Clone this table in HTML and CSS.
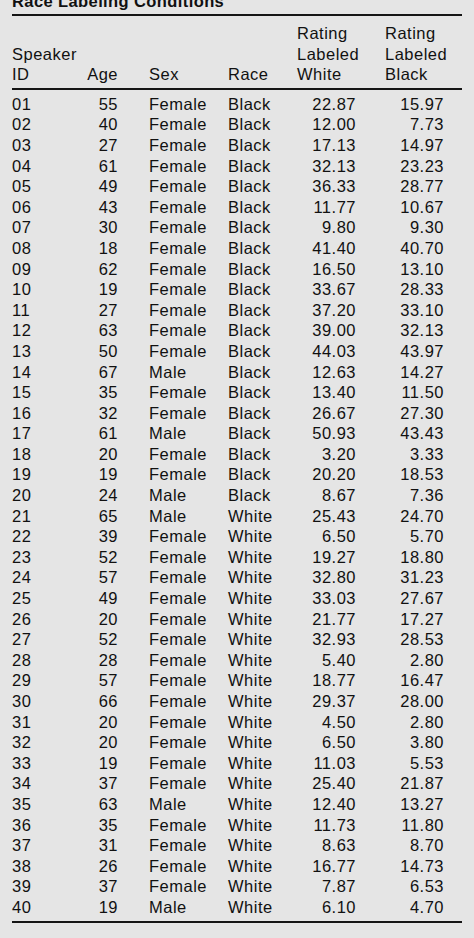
FILE: index.html
```html
<!DOCTYPE html>
<html>
<head>
<meta charset="utf-8">
<link rel="stylesheet" href="styles.css">
</head>
<body>
<div class="page">
  <div class="title">Race Labeling Conditions</div>
  <table class="data">
    <colgroup>
      <col class="c1"><col class="c2"><col class="c3"><col class="c4"><col class="c5"><col class="c6"><col class="c7">
    </colgroup>
    <thead>
      <tr>
        <th class="l">Speaker<br>ID</th>
        <th class="r">Age</th>
        <th class="l sex">Sex</th>
        <th class="l">Race</th>
        <th class="l">Rating<br>Labeled<br>White</th>
        <th class="l black">Rating<br>Labeled<br>Black</th>
        <th></th>
      </tr>
    </thead>
    <tbody id="rows">
<tr><td>01</td><td class="r">55</td><td class="sex">Female</td><td>Black</td><td class="r">22.87</td><td class="r">15.97</td><td></td></tr>
<tr><td>02</td><td class="r">40</td><td class="sex">Female</td><td>Black</td><td class="r">12.00</td><td class="r">7.73</td><td></td></tr>
<tr><td>03</td><td class="r">27</td><td class="sex">Female</td><td>Black</td><td class="r">17.13</td><td class="r">14.97</td><td></td></tr>
<tr><td>04</td><td class="r">61</td><td class="sex">Female</td><td>Black</td><td class="r">32.13</td><td class="r">23.23</td><td></td></tr>
<tr><td>05</td><td class="r">49</td><td class="sex">Female</td><td>Black</td><td class="r">36.33</td><td class="r">28.77</td><td></td></tr>
<tr><td>06</td><td class="r">43</td><td class="sex">Female</td><td>Black</td><td class="r">11.77</td><td class="r">10.67</td><td></td></tr>
<tr><td>07</td><td class="r">30</td><td class="sex">Female</td><td>Black</td><td class="r">9.80</td><td class="r">9.30</td><td></td></tr>
<tr><td>08</td><td class="r">18</td><td class="sex">Female</td><td>Black</td><td class="r">41.40</td><td class="r">40.70</td><td></td></tr>
<tr><td>09</td><td class="r">62</td><td class="sex">Female</td><td>Black</td><td class="r">16.50</td><td class="r">13.10</td><td></td></tr>
<tr><td>10</td><td class="r">19</td><td class="sex">Female</td><td>Black</td><td class="r">33.67</td><td class="r">28.33</td><td></td></tr>
<tr><td>11</td><td class="r">27</td><td class="sex">Female</td><td>Black</td><td class="r">37.20</td><td class="r">33.10</td><td></td></tr>
<tr><td>12</td><td class="r">63</td><td class="sex">Female</td><td>Black</td><td class="r">39.00</td><td class="r">32.13</td><td></td></tr>
<tr><td>13</td><td class="r">50</td><td class="sex">Female</td><td>Black</td><td class="r">44.03</td><td class="r">43.97</td><td></td></tr>
<tr><td>14</td><td class="r">67</td><td class="sex">Male</td><td>Black</td><td class="r">12.63</td><td class="r">14.27</td><td></td></tr>
<tr><td>15</td><td class="r">35</td><td class="sex">Female</td><td>Black</td><td class="r">13.40</td><td class="r">11.50</td><td></td></tr>
<tr><td>16</td><td class="r">32</td><td class="sex">Female</td><td>Black</td><td class="r">26.67</td><td class="r">27.30</td><td></td></tr>
<tr><td>17</td><td class="r">61</td><td class="sex">Male</td><td>Black</td><td class="r">50.93</td><td class="r">43.43</td><td></td></tr>
<tr><td>18</td><td class="r">20</td><td class="sex">Female</td><td>Black</td><td class="r">3.20</td><td class="r">3.33</td><td></td></tr>
<tr><td>19</td><td class="r">19</td><td class="sex">Female</td><td>Black</td><td class="r">20.20</td><td class="r">18.53</td><td></td></tr>
<tr><td>20</td><td class="r">24</td><td class="sex">Male</td><td>Black</td><td class="r">8.67</td><td class="r">7.36</td><td></td></tr>
<tr><td>21</td><td class="r">65</td><td class="sex">Male</td><td>White</td><td class="r">25.43</td><td class="r">24.70</td><td></td></tr>
<tr><td>22</td><td class="r">39</td><td class="sex">Female</td><td>White</td><td class="r">6.50</td><td class="r">5.70</td><td></td></tr>
<tr><td>23</td><td class="r">52</td><td class="sex">Female</td><td>White</td><td class="r">19.27</td><td class="r">18.80</td><td></td></tr>
<tr><td>24</td><td class="r">57</td><td class="sex">Female</td><td>White</td><td class="r">32.80</td><td class="r">31.23</td><td></td></tr>
<tr><td>25</td><td class="r">49</td><td class="sex">Female</td><td>White</td><td class="r">33.03</td><td class="r">27.67</td><td></td></tr>
<tr><td>26</td><td class="r">20</td><td class="sex">Female</td><td>White</td><td class="r">21.77</td><td class="r">17.27</td><td></td></tr>
<tr><td>27</td><td class="r">52</td><td class="sex">Female</td><td>White</td><td class="r">32.93</td><td class="r">28.53</td><td></td></tr>
<tr><td>28</td><td class="r">28</td><td class="sex">Female</td><td>White</td><td class="r">5.40</td><td class="r">2.80</td><td></td></tr>
<tr><td>29</td><td class="r">57</td><td class="sex">Female</td><td>White</td><td class="r">18.77</td><td class="r">16.47</td><td></td></tr>
<tr><td>30</td><td class="r">66</td><td class="sex">Female</td><td>White</td><td class="r">29.37</td><td class="r">28.00</td><td></td></tr>
<tr><td>31</td><td class="r">20</td><td class="sex">Female</td><td>White</td><td class="r">4.50</td><td class="r">2.80</td><td></td></tr>
<tr><td>32</td><td class="r">20</td><td class="sex">Female</td><td>White</td><td class="r">6.50</td><td class="r">3.80</td><td></td></tr>
<tr><td>33</td><td class="r">19</td><td class="sex">Female</td><td>White</td><td class="r">11.03</td><td class="r">5.53</td><td></td></tr>
<tr><td>34</td><td class="r">37</td><td class="sex">Female</td><td>White</td><td class="r">25.40</td><td class="r">21.87</td><td></td></tr>
<tr><td>35</td><td class="r">63</td><td class="sex">Male</td><td>White</td><td class="r">12.40</td><td class="r">13.27</td><td></td></tr>
<tr><td>36</td><td class="r">35</td><td class="sex">Female</td><td>White</td><td class="r">11.73</td><td class="r">11.80</td><td></td></tr>
<tr><td>37</td><td class="r">31</td><td class="sex">Female</td><td>White</td><td class="r">8.63</td><td class="r">8.70</td><td></td></tr>
<tr><td>38</td><td class="r">26</td><td class="sex">Female</td><td>White</td><td class="r">16.77</td><td class="r">14.73</td><td></td></tr>
<tr><td>39</td><td class="r">37</td><td class="sex">Female</td><td>White</td><td class="r">7.87</td><td class="r">6.53</td><td></td></tr>
<tr><td>40</td><td class="r">19</td><td class="sex">Male</td><td>White</td><td class="r">6.10</td><td class="r">4.70</td><td></td></tr>
    </tbody>
  </table>
</div>
</body>
</html>
```

FILE: styles.css
```css
html, body {
  margin: 0;
  padding: 0;
  background: #e5e5e5;
}
body {
  font-family: "Liberation Sans", Arial, sans-serif;
  font-size: 16.5px;
  letter-spacing: 0.5px;
  color: #111;
  overflow: hidden;
  height: 938px;
}
.page {
  padding: 0 12px;
}
.title {
  font-weight: bold;
  font-size: 16.5px;
  letter-spacing: 0.4px;
  line-height: 20px;
  margin-top: -9px;
  height: 20px;
  margin-bottom: 3px;
}
.data {
  width: 450px;
  table-layout: fixed;
  border-collapse: collapse;
  border-top: 2px solid #151515;
  border-bottom: 2px solid #151515;
}
.c1 { width: 60px; }
.c2 { width: 46px; }
.c3 { width: 110px; }
.c4 { width: 69px; }
.c5 { width: 59px; }
.c6 { width: 88px; }
.c7 { width: 18px; }
th, td {
  padding: 0;
  font-weight: normal;
  line-height: 20.6px;
  white-space: nowrap;
  text-align: left;
}
thead th {
  vertical-align: bottom;
  border-bottom: 2px solid #151515;
  padding-top: 7px;
  padding-bottom: 3px;
}
.r { text-align: right; margin-right: -0.5px; }
td.r, th.r { padding-right: 0; }
.sex { padding-left: 31px; }
.black { padding-left: 29px; }
tbody tr:first-child td { padding-top: 4px; }
tbody tr:last-child td { padding-bottom: 3px; }
```
